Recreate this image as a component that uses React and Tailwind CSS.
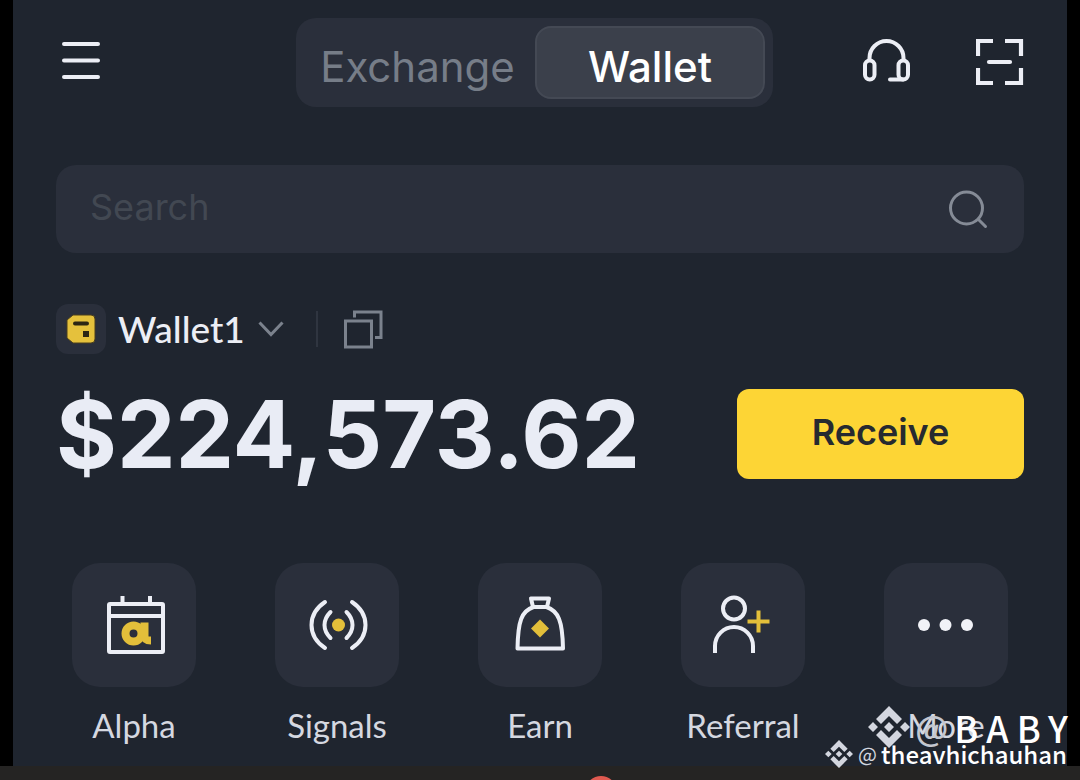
import clsx from "clsx";

const TABS = ["Exchange", "Wallet"];

function MenuIcon() {
  return (
    <svg width="38" height="40" viewBox="0 0 38 40" fill="none" stroke="currentColor" strokeWidth="4" strokeLinecap="round">
      <path d="M2 4h34M2 20.5h34M2 37h34" />
    </svg>
  );
}

function HeadsetIcon() {
  return (
    <svg width="48" height="50" viewBox="0 0 48 50" fill="none" stroke="currentColor" strokeWidth="4" strokeLinecap="round">
      <path d="M6.500 22v-2a17 17 0 0 1 34 0v2" />
      <rect x="2" y="22.500" width="9.500" height="19" rx="4.700" />
      <rect x="35.500" y="22.500" width="9.500" height="19" rx="4.700" />
      <path d="M27 41.500h13" />
    </svg>
  );
}

function ScanIcon() {
  return (
    <svg width="48" height="48" viewBox="0 0 48 48" fill="none" stroke="currentColor" strokeWidth="4.2">
      <path d="M17 3H2v15M29 3h16v15M17 45H2V30M29 45h16V30" />
      <path d="M13 24h21" strokeLinecap="round" />
    </svg>
  );
}

function SearchIcon() {
  return (
    <svg width="40" height="40" viewBox="0 0 40 40" fill="none" stroke="currentColor" strokeWidth="3" strokeLinecap="round">
      <circle cx="18.500" cy="19" r="16" />
      <path d="M30.500 30.500l7 7" />
    </svg>
  );
}

function WalletBadge() {
  return (
    <span className="flex size-[50px] items-center justify-center rounded-xl bg-[#2a2f3b]">
      <svg width="30" height="30" viewBox="0 0 30 30">
        <path d="M7 1h18a4 4 0 0 1 4 4v20a4 4 0 0 1-4 4H7l-6-5V6z" fill="#e5c13c" stroke="#4a3f1d" strokeWidth="1" />
        <path d="M9 9.500h12" stroke="#2c2614" strokeWidth="4" strokeLinecap="round" />
        <rect x="17" y="17" width="6" height="6" fill="#2c2614" />
      </svg>
    </span>
  );
}

function ChevronIcon() {
  return (
    <svg width="26" height="16" viewBox="0 0 26 16" fill="none" stroke="#7b828d" strokeWidth="3">
      <path d="M1.500 1.500L13 13.500l11.500-12" />
    </svg>
  );
}

function CopyIcon() {
  return (
    <svg width="40" height="40" viewBox="0 0 40 40" fill="none" stroke="#7b828d" strokeWidth="3">
      <rect x="2.500" y="12" width="26" height="26" />
      <path d="M11.500 8.500V3H38v25.500h-6" />
    </svg>
  );
}

function AlphaIcon() {
  return (
    <svg width="62" height="62" viewBox="0 0 62 62" fill="none" stroke="#eceef5" strokeWidth="4">
      <rect x="6" y="10" width="54" height="48" rx="1" />
      <path d="M6 22h54M19.500 10V2M47 10V2" />
      <g stroke="#e3bf3a" strokeWidth="8">
        <circle cx="30.500" cy="39.500" r="8" />
        <path d="M41.500 28.500v13c0 3.500 1.500 5 6.500 5" />
      </g>
    </svg>
  );
}

function SignalsIcon() {
  return (
    <svg width="62" height="62" viewBox="0 0 62 62" fill="none" stroke="#eceef5" strokeWidth="4" strokeLinecap="round">
      <path d="M19 8C1 20 1 42 19 54M46 8c18 12 18 34 0 46" />
      <path d="M24.500 18c-8 8-8 18 0 26M40.500 18c8 8 8 18 0 26" />
      <circle cx="32.500" cy="31" r="6.500" fill="#e3bf3a" stroke="none" />
    </svg>
  );
}

function EarnIcon() {
  return (
    <svg width="62" height="62" viewBox="0 0 62 62" fill="none" stroke="#eceef5" strokeWidth="4" strokeLinejoin="round">
      <path d="M22 4.500h18l-2 8.500h-14z" />
      <path d="M24.500 13C12.500 17 9 27 8.500 54.500h45.500C53.500 27 49.500 17 37.500 13" />
      <path d="M31 25.500l9 9-9 9-9-9z" fill="#e3bf3a" stroke="none" />
    </svg>
  );
}

function ReferralIcon() {
  return (
    <svg width="62" height="62" viewBox="0 0 62 62" fill="none" stroke="#eceef5" strokeWidth="4">
      <circle cx="22" cy="14.500" r="11" />
      <path d="M3 59V52a19 19 0 0 1 38 0v7" />
      <path d="M46.500 16.500v22M35.500 27.500h22" stroke="#e3bf3a" />
    </svg>
  );
}

function MoreIcon() {
  return (
    <svg width="62" height="62" viewBox="0 0 62 62" fill="#f1f2f7">
      <circle cx="9" cy="31" r="6" />
      <circle cx="30.500" cy="31" r="6" />
      <circle cx="52" cy="31" r="6" />
    </svg>
  );
}

function DiamondLogo({ className }) {
  return (
    <svg className={className} viewBox="0 0 42 42" fill="#d3d6df">
      <path d="M21 0l13 13-5 5-8-8-8 8-5-5zM21 42l13-13-5-5-8 8-8-8-5 5z" />
      <path d="M21 16l5 5-5 5-5-5zM5 16l5 5-5 5-5-5zM37 16l5 5-5 5-5-5z" />
    </svg>
  );
}

const ACTIONS = [
  { label: "Alpha", icon: AlphaIcon },
  { label: "Signals", icon: SignalsIcon },
  { label: "Earn", icon: EarnIcon },
  { label: "Referral", icon: ReferralIcon },
  { label: "More", icon: MoreIcon },
];

function Header() {
  return (
    <header className="flex items-start pt-[18px] text-[#eceef5]">
      <button type="button" aria-label="Menu" className="mt-[22px] mr-auto ml-[6px]">
        <MenuIcon />
      </button>

      <div role="tablist" className="flex h-[89px] gap-2 rounded-[20px] bg-[#2a2f3b] p-2">
        {TABS.map((tab) => (
          <button
            key={tab}
            type="button"
            role="tab"
            aria-selected={tab === "Wallet"}
            className={clsx(
              "rounded-2xl pt-[8px] font-[Inter,sans-serif] text-[42px] leading-[50px]",
              tab === "Wallet"
                ? "w-[230px] border-2 border-[#444954] bg-[#3b404b] font-medium text-white"
                : "w-[223px] pl-1 text-[#767d88]"
            )}
          >
            {tab}
          </button>
        ))}
      </div>

      <div className="ml-[90px] flex gap-[65px]">
        <button type="button" aria-label="Support" className="mt-5">
          <HeadsetIcon />
        </button>
        <button type="button" aria-label="Scan" className="mt-[18px]">
          <ScanIcon />
        </button>
      </div>
    </header>
  );
}

function Watermarks() {
  return (
    <div className="pointer-events-none absolute right-0 bottom-0 font-['Noto_Sans_CJK_SC',sans-serif] whitespace-nowrap text-white">
      <div className="absolute right-[4px] bottom-[32px] flex items-center">
        <DiamondLogo className="size-[42px]" />
        <span className="ml-[5px] text-[34px] leading-[42px] font-medium text-[#c3c7d0]">@</span>
        <span className="ml-[6px] text-[36px] leading-[42px] font-medium tracking-[8px]">BABY</span>
      </div>
      <div className="absolute right-[13px] bottom-[10px] flex items-center">
        <DiamondLogo className="size-[28px]" />
        <span className="ml-[5px] text-[20px] leading-8 text-[#d3d6df]">@</span>
        <span className="ml-1 text-[24px] leading-8 font-medium">theavhichauhan</span>
      </div>
    </div>
  );
}

export default function App() {
  return (
    <div className="relative overflow-hidden bg-[#252423] font-[Lato,sans-serif]">
      <div className="bg-black px-[13px]">
        <main className="bg-[#1f252f] px-[43px] pb-[21px]">
          <Header />

          <label className="mt-[58px] flex h-[88px] items-center rounded-[20px] bg-[#2a2f3b] pr-[36px] pl-[34px] text-[#858b96]">
            <input
              type="text"
              aria-label="Search"
              placeholder="Search"
              className="min-w-0 flex-1 bg-transparent pb-1 font-[Inter,sans-serif] text-[36px] leading-[48px] outline-none placeholder:text-[#424852]"
            />
            <SearchIcon />
          </label>

          <div className="mt-[51px] flex h-[50px] items-center">
            <button type="button" className="flex items-center text-[#eceef5]">
              <WalletBadge />
              <span className="mr-[13px] ml-[12px] text-[37px] leading-[48px] font-medium">Wallet1</span>
              <ChevronIcon />
            </button>
            <span className="mr-[25px] ml-[32px] h-9 w-[2px] bg-[#2f3540]" />
            <button type="button" aria-label="Copy address">
              <CopyIcon />
            </button>
          </div>

          <section className="mt-[35px] flex h-[90px] items-center justify-between">
            <p className="font-[Inter,sans-serif] text-[93px] leading-[90px] font-bold text-[#e9ecf5]">$224,573.62</p>
            <button
              type="button"
              className="h-[90px] w-[287px] rounded-xl bg-[#fdd535] pb-1 font-[Inter,sans-serif] text-[36px] leading-[48px] font-semibold text-[#262a30]"
            >
              Receive
            </button>
          </section>

          <nav className="mt-[84px] flex justify-between px-4">
            {ACTIONS.map(({ label, icon: Icon }) => (
              <button key={label} type="button" className="flex w-[124px] flex-col items-center">
                <span className="flex size-[124px] items-center justify-center rounded-[28px] bg-[#2a2f3b]">
                  <Icon />
                </span>
                <span className="mt-[18px] text-[33px] leading-10 text-[#d5d8e0]">{label}</span>
              </button>
            ))}
          </nav>
        </main>
      </div>

      <footer className="flex h-[14px] justify-center overflow-hidden pl-[122px]">
        <span className="mt-[10px] size-8 rounded-full bg-[#e05a50]" />
      </footer>

      <Watermarks />
    </div>
  );
}
